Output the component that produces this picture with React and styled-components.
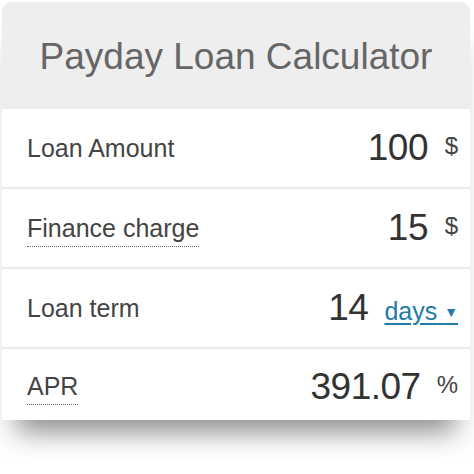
import styled, { createGlobalStyle } from "styled-components";

const GlobalStyle = createGlobalStyle`
  html, body {
    margin: 0;
    padding: 0;
    background: #ffffff;
    font-family: "Liberation Sans", Arial, sans-serif;
  }
`;

const Page = styled.div`
  width: 474px;
  height: 474px;
  padding: 2px 4px 0 2px;
  box-sizing: border-box;
  overflow: hidden;
`;

const Card = styled.section`
  background: #ececec;
  border-radius: 10px 10px 0 0;
  box-shadow: 0 26px 26px -14px rgba(0, 0, 0, 0.45);
  display: flex;
  flex-direction: column;
  gap: 2px;
`;

const Header = styled.h1`
  margin: 0;
  height: 105px;
  display: flex;
  align-items: center;
  justify-content: center;
  background: #eeeeee;
  border-radius: 10px 10px 0 0;
  color: #666666;
  font-size: 37px;
  font-weight: 400;
  padding-top: 4px;
  box-sizing: border-box;
`;

const Row = styled.div`
  height: ${({ $h }) => $h || 78}px;
  background: #ffffff;
  display: flex;
  align-items: center;
  justify-content: space-between;
  padding: ${({ $shift }) => $shift || 0}px 12px 0 25px;
  box-sizing: border-box;
`;

const Label = styled.span`
  color: #444444;
  font-size: 25px;
  padding-bottom: ${({ $hint }) => ($hint ? "3px" : "0")};
  border-bottom: ${({ $hint }) => ($hint ? "1px dotted #666" : "none")};
  margin-top: ${({ $hint }) => ($hint ? "4px" : "0")};
`;

const Field = styled.div`
  display: flex;
  align-items: baseline;
  gap: 16px;
`;

const Value = styled.span`
  color: #333333;
  font-size: 37px;
  letter-spacing: -0.5px;
`;

const Unit = styled.span`
  color: #444444;
  font-size: 24px;
  min-width: 14px;
  text-align: right;
  position: relative;
  top: -6px;
`;

const UnitSelect = styled.span`
  color: #1f7ba8;
  font-size: 25px;
  text-decoration: underline;
  text-underline-offset: 3px;
  white-space: pre;
`;

const Caret = styled.span`
  font-size: 14px;
  position: relative;
  top: -3px;
`;

const rows = [
  { label: "Loan Amount", value: "100", unit: "$" },
  { label: "Finance charge", value: "15", unit: "$", hint: true },
  { label: "Loan term", value: "14", select: "days" },
  { label: "APR", value: "391.07", unit: "%", hint: true, h: 71, shift: 4 },
];

export default function App() {
  return (
    <>
      <GlobalStyle />
      <Page>
        <Card>
          <Header>Payday Loan Calculator</Header>
          {rows.map((r) => (
            <Row key={r.label} $h={r.h} $shift={r.shift}>
              <Label $hint={r.hint}>{r.label}</Label>
              <Field>
                <Value>{r.value}</Value>
                {r.select ? (
                  <UnitSelect>
                    {r.select} <Caret>▼</Caret>
                  </UnitSelect>
                ) : (
                  <Unit>{r.unit}</Unit>
                )}
              </Field>
            </Row>
          ))}
        </Card>
      </Page>
    </>
  );
}
